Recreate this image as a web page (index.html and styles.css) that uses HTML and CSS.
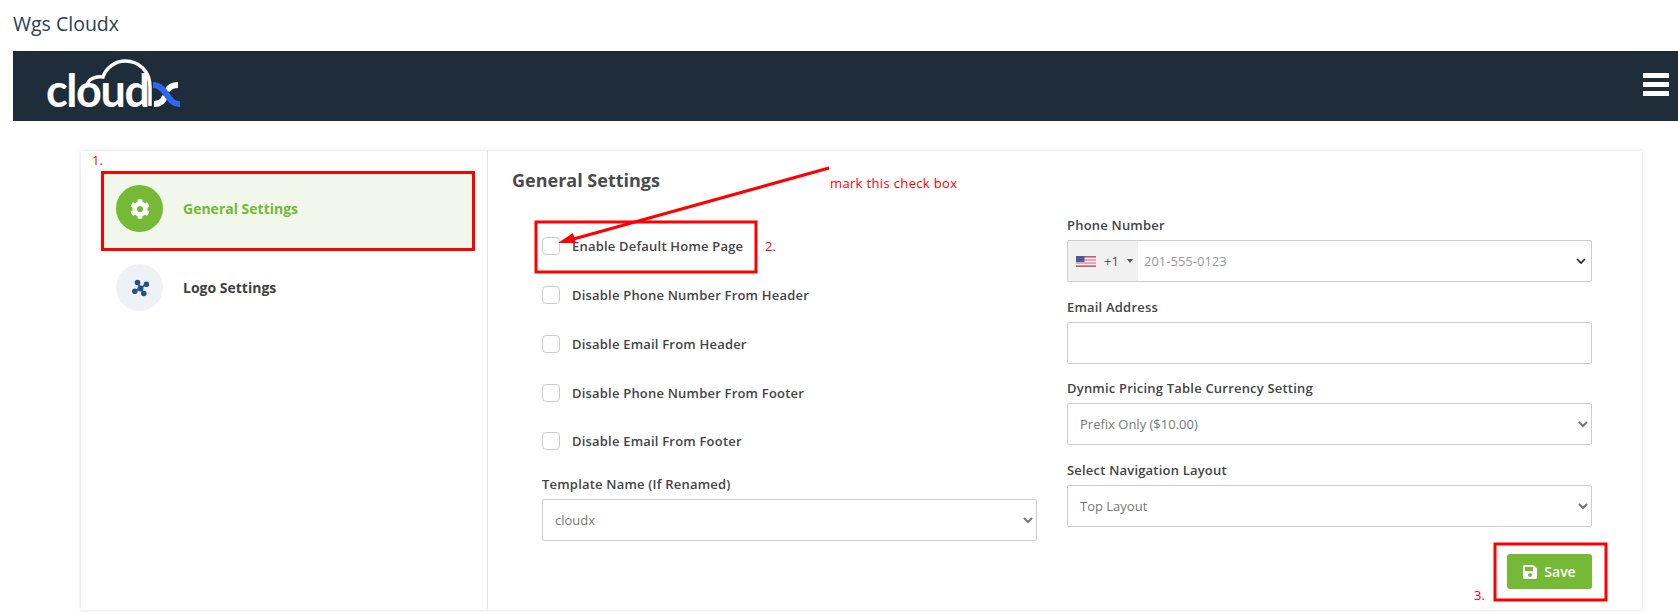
FILE: index.html
```html
<!DOCTYPE html>
<html lang="en">
<head>
<meta charset="utf-8">
<title>Wgs Cloudx</title>
<link rel="stylesheet" href="styles.css">
</head>
<body>
<h1 class="page-title">Wgs Cloudx</h1>
<header class="topbar">
  <svg class="logo" viewBox="0 0 140 56" width="140" height="56" role="img" aria-label="cloudx">
    <path class="logo-cloud" d="M40 28 C41 21 48 18 56 19 C59 10 68 3 78 3 C92 3 103 13 103 29 L103 48"/>
    <text class="logo-text" x="-1" y="49">cloud</text>
    <path class="logo-x-white" d="M107 46 C114 46 117 42 118 38 M131 27 C125 27 122 29 120 33"/>
    <path class="logo-x-blue" d="M106 27 C120 27 120 47 133 46"/>
  </svg>
  <div class="burger"><span></span><span></span><span></span></div>
</header>
<main class="card">
  <nav class="sidebar">
    <a class="nav-item active">
      <span class="nav-icon">
        <svg viewBox="0 0 512 512" width="20" height="20"><path fill="currentColor" d="M487.4 315.7l-42.6-24.6c4.3-23.2 4.3-47 0-70.2l42.6-24.6c4.9-2.8 7.1-8.6 5.5-14-11.1-35.6-30-67.8-54.7-94.6-3.8-4.1-10-5.1-14.8-2.3L380.8 110c-17.9-15.4-38.5-27.3-60.8-35.1V25.8c0-5.6-3.9-10.5-9.4-11.7-36.7-8.2-74.3-7.8-109.2 0-5.5 1.2-9.4 6.1-9.4 11.7V75c-22.2 7.9-42.8 19.8-60.8 35.1L88.7 85.5c-4.9-2.8-11-1.9-14.8 2.3-24.7 26.7-43.6 58.9-54.7 94.6-1.7 5.4.6 11.2 5.5 14L67.3 221c-4.3 23.2-4.3 47 0 70.2l-42.6 24.6c-4.9 2.8-7.1 8.6-5.5 14 11.1 35.6 30 67.8 54.7 94.6 3.8 4.1 10 5.1 14.8 2.3l42.6-24.6c17.9 15.4 38.5 27.3 60.8 35.1v49.2c0 5.6 3.9 10.5 9.4 11.7 36.7 8.2 74.3 7.8 109.2 0 5.5-1.2 9.4-6.1 9.4-11.7v-49.2c22.2-7.9 42.8-19.8 60.8-35.1l42.6 24.6c4.9 2.8 11 1.9 14.8-2.3 24.7-26.7 43.6-58.9 54.7-94.6 1.5-5.5-.7-11.3-5.6-14.1zM256 336c-44.1 0-80-35.9-80-80s35.9-80 80-80 80 35.9 80 80-35.9 80-80 80z"/></svg>
      </span>
      General Settings
    </a>
    <a class="nav-item">
      <span class="nav-icon">
        <svg viewBox="0 0 18 18" width="18" height="18"><path d="M6.5 3.5L12.8 14.5M15.5 5.2L3.8 12.3" stroke="currentColor" stroke-width="1.6"/><g fill="currentColor"><circle cx="6.5" cy="3.5" r="2.8"/><circle cx="15.5" cy="5.2" r="2.8"/><circle cx="9.5" cy="9.5" r="3"/><circle cx="3.8" cy="12.3" r="2.8"/><circle cx="12.8" cy="14.5" r="2.8"/></g></svg>
      </span>
      Logo Settings
    </a>
  </nav>
  <section class="content">
    <h2 class="content-title">General Settings</h2>
    <div class="form-grid">
      <div class="col-left">
        <label class="check-row"><input type="checkbox" class="check"><span>Enable Default Home Page</span></label>
        <label class="check-row"><input type="checkbox" class="check"><span>Disable Phone Number From Header</span></label>
        <label class="check-row"><input type="checkbox" class="check"><span>Disable Email From Header</span></label>
        <label class="check-row"><input type="checkbox" class="check"><span>Disable Phone Number From Footer</span></label>
        <label class="check-row"><input type="checkbox" class="check"><span>Disable Email From Footer</span></label>
        <div class="field field-template">
          <label class="field-label">Template Name (If Renamed)</label>
          <select class="control"><option>cloudx</option></select>
        </div>
      </div>
      <div class="col-right">
        <div class="field">
          <label class="field-label">Phone Number</label>
          <div class="phone control">
            <div class="dial">
              <svg class="flag" viewBox="0 0 20 11" width="20" height="11">
                <rect width="20" height="11" fill="#e8a6ad"/>
                <path d="M0 2.5h20M0 5.5h20M0 8.5h20" stroke="#fff" stroke-width=".9"/>
                <path d="M0 .6h20M0 10.4h20" stroke="#c9596a" stroke-width="1.1"/>
                <rect width="8.5" height="6" fill="#4f5a94"/>
              </svg>
              <span class="dial-code">+1</span>
              <span class="dial-caret"></span>
            </div>
            <span class="phone-placeholder">201-555-0123</span>
            <svg class="chevron" viewBox="0 0 10 6" width="10" height="6"><path d="M1 1l4 4 4-4" fill="none" stroke="#222" stroke-width="1.7"/></svg>
          </div>
        </div>
        <div class="field">
          <label class="field-label">Email Address</label>
          <input type="text" class="control">
        </div>
        <div class="field">
          <label class="field-label">Dynmic Pricing Table Currency Setting</label>
          <select class="control"><option>Prefix Only ($10.00)</option></select>
        </div>
        <div class="field">
          <label class="field-label">Select Navigation Layout</label>
          <select class="control"><option>Top Layout</option></select>
        </div>
        <div class="actions">
          <button class="save" type="button">
            <svg viewBox="0 0 448 512" width="14" height="16"><path fill="currentColor" d="M433.941 129.941l-83.882-83.882A48 48 0 0 0 316.118 32H48C21.49 32 0 53.49 0 80v352c0 26.51 21.49 48 48 48h352c26.51 0 48-21.49 48-48V163.882a48 48 0 0 0-14.059-33.941zM224 416c-35.346 0-64-28.654-64-64 0-35.346 28.654-64 64-64s64 28.654 64 64c0 35.346-28.654 64-64 64zm96-304.52V212c0 6.627-5.373 12-12 12H76c-6.627 0-12-5.373-12-12V108c0-6.627 5.373-12 12-12h228.52c3.183 0 6.235 1.264 8.485 3.515l3.48 3.48A11.996 11.996 0 0 1 320 111.48z"/></svg>
            Save
          </button>
        </div>
      </div>
    </div>
  </section>
</main>

<svg class="markup" viewBox="0 0 1678 612" width="1678" height="612" aria-hidden="true">
  <g fill="none" stroke="#ff0000" stroke-width="3">
    <rect x="102.5" y="172.5" width="371" height="77"/>
    <rect x="536" y="222" width="220" height="50"/>
    <rect x="1495" y="544" width="111" height="56"/>
    <path d="M829 168 L570 240"/>
  </g>
  <path d="M558 243 L573 233 L576 243 Z" fill="#ff0000"/>
</svg>
<span class="note note-1">1.</span>
<span class="note note-2">2.</span>
<span class="note note-3">3.</span>
<span class="note note-mark">mark this check box</span>
</body>
</html>
```

FILE: styles.css
```css
* { box-sizing: border-box; }
html, body { margin: 0; padding: 0; }
body {
  width: 1678px;
  height: 612px;
  overflow: hidden;
  position: relative;
  background: #fff;
  font-family: "Open Sans", "Liberation Sans", sans-serif;
  color: #333;
}
.page-title {
  margin: 0;
  height: 51px;
  padding: 11px 0 0 13px;
  font-size: 19.5px;
  line-height: 26px;
  font-weight: 400;
  color: #2c3e50;
}
.topbar {
  margin-left: 13px;
  height: 70px;
  background: #1f2c39;
  display: flex;
  align-items: flex-start;
  justify-content: space-between;
  padding: 7px 9px 0 34px;
}
.logo { display: block; overflow: visible; }
.logo-text {
  font-family: Lato, "Open Sans", sans-serif;
  font-size: 45px;
  font-weight: 700;
  letter-spacing: -1.4px;
  fill: #fff;
}
.logo-cloud { fill: none; stroke: #fff; stroke-width: 3.5; }
.logo-x-white { fill: none; stroke: #fff; stroke-width: 6; }
.logo-x-blue { fill: none; stroke: #2c69f0; stroke-width: 6; }
.burger {
  display: flex;
  flex-direction: column;
  gap: 4px;
  margin-top: 15px;
}
.burger span {
  display: block;
  width: 26px;
  height: 5px;
  background: #fff;
}
.card {
  margin: 30px 0 0 81px;
  width: 1561px;
  height: 459px;
  background: #fff;
  box-shadow: 0 0 4px rgba(0, 0, 0, .16);
  display: flex;
}
.sidebar {
  width: 407px;
  flex: none;
  border-right: 1px solid #e3e3e3;
  padding: 21px 13px 0 21px;
  display: flex;
  flex-direction: column;
  gap: 2px;
}
.nav-item {
  display: flex;
  align-items: center;
  gap: 20px;
  height: 77px;
  padding: 0 0 4px 14px;
  font-size: 14px;
  font-weight: 700;
  color: #3f3f3f;
}
.nav-item.active { background: #f1f8eb; color: #75b936; }
.nav-icon {
  width: 47px;
  height: 47px;
  border-radius: 50%;
  background: #eef2f7;
  color: #234f8c;
  display: flex;
  align-items: center;
  justify-content: center;
  flex: none;
}
.active .nav-icon { background: #75b936; color: #fff; }
.content { flex: 1; padding: 17px 0 0 24px; }
.content-title {
  margin: 0;
  font-size: 18px;
  line-height: 24px;
  font-weight: 700;
  color: #4a4a4a;
}
.form-grid {
  display: grid;
  grid-template-columns: 495px 525px;
  column-gap: 30px;
  margin: 21px 0 0 30px;
}
.col-left { display: flex; flex-direction: column; }
.check-row {
  display: flex;
  align-items: center;
  gap: 12px;
  height: 49px;
  font-size: 13px;
  font-weight: 600;
  letter-spacing: .2px;
  color: #444;
}
.check-row:first-child { margin-top: 8px; }
.check-row:nth-child(5) { height: 48px; }
.check {
  appearance: none;
  width: 18px;
  height: 18px;
  margin: 0;
  border: 1px solid #ccc;
  border-radius: 4px;
  background: #fff;
}
.field-template { margin-top: 10px; }
.field-template .field-label { height: 24px; }
.col-right { display: flex; flex-direction: column; padding-top: 3px; }
.field { height: 81.5px; }
.field-label {
  display: block;
  height: 24px;
  font-size: 13px;
  line-height: 18px;
  font-weight: 600;
  letter-spacing: .2px;
  color: #444;
}
.control {
  display: block;
  width: 100%;
  height: 42px;
  border: 1px solid #ccc;
  border-radius: 2px;
  background: #fff;
  padding: 0 8px;
  font-family: "Open Sans", sans-serif;
  font-size: 13px;
  color: #777;
  outline: none;
}
.phone {
  display: flex;
  align-items: center;
  padding: 0;
  position: relative;
}
.dial {
  width: 70px;
  height: 100%;
  background: #f1f1f1;
  display: flex;
  align-items: center;
  padding-left: 8px;
  flex: none;
}
.flag { display: block; }
.dial-code { margin-left: 8px; font-size: 13px; color: #555; }
.dial-caret {
  margin-left: 8px;
  width: 0;
  height: 0;
  border: 3px solid transparent;
  border-top: 4px solid #555;
  border-bottom: 0;
}
.phone-placeholder { margin-left: 6px; color: #999; font-size: 13px; }
.chevron { margin-left: auto; margin-right: 5px; }
.actions { display: flex; justify-content: flex-end; margin-top: 12px; }
.save {
  width: 85px;
  height: 35px;
  border: 0;
  border-radius: 3px;
  background: #75b936;
  color: #fff;
  font-family: "Open Sans", sans-serif;
  font-size: 14px;
  font-weight: 600;
  display: flex;
  align-items: center;
  justify-content: center;
  gap: 7px;
}
.markup { position: absolute; left: 0; top: 0; pointer-events: none; }
.note {
  position: absolute;
  font-family: "Open Sans", sans-serif;
  font-size: 13px;
  line-height: 14px;
  color: #f00;
}
.note-1 { left: 92px; top: 153px; }
.note-2 { left: 765px; top: 239px; }
.note-3 { left: 1474px; top: 588px; }
.note-mark {
  left: 830px;
  top: 176px;
  letter-spacing: .35px;
}
```
